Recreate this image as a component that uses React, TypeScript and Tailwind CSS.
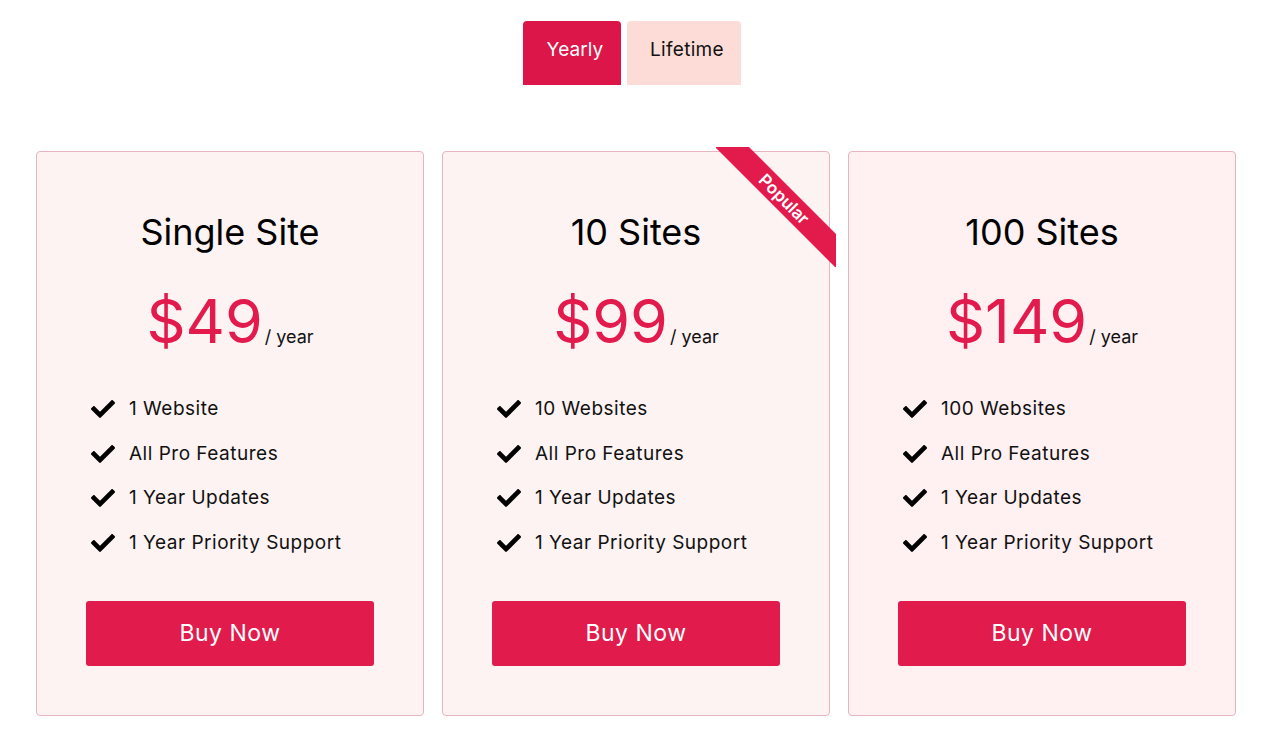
import React from "react";
import { FaCheck } from "react-icons/fa";

type Plan = {
  title: string;
  price: string;
  features: string[];
  popular?: boolean;
  bg: string;
};

const plans: Plan[] = [
  {
    title: "Single Site",
    price: "$49",
    features: ["1 Website", "All Pro Features", "1 Year Updates", "1 Year Priority Support"],
    bg: "bg-[#fdf3f3]",
  },
  {
    title: "10 Sites",
    price: "$99",
    features: ["10 Websites", "All Pro Features", "1 Year Updates", "1 Year Priority Support"],
    popular: true,
    bg: "bg-[#fdf3f3]",
  },
  {
    title: "100 Sites",
    price: "$149",
    features: ["100 Websites", "All Pro Features", "1 Year Updates", "1 Year Priority Support"],
    bg: "bg-[#fff0f1]",
  },
];

function Card({ plan }: { plan: Plan }) {
  return (
    <div
      className={`relative flex h-[565px] w-[388px] flex-col rounded border border-[#e6b5bf] ${plan.bg} px-[49px] pt-[58px]`}
    >
      {plan.popular && (
        <div className="pointer-events-none absolute right-[-7px] top-[-5px] h-[120px] w-[120px] overflow-hidden">
          <div className="absolute left-[-32px] top-[40px] flex h-[24px] w-[200px] rotate-45 items-center justify-center bg-[#e31b4d] text-[17px] font-semibold leading-none text-white">
            Popular
          </div>
        </div>
      )}
      <h2 className="text-center text-[36px] font-normal leading-[44px] text-black">{plan.title}</h2>
      <div className="mt-[29px] flex items-baseline justify-center">
        <span className="text-[61px] leading-[77px] text-[#e31b4d]">{plan.price}</span>
        <span className="ml-[2px] text-[18px] text-[#111]">/ year</span>
      </div>
      <ul className="mt-[27px] flex flex-col pl-[5px]">
        {plan.features.map((f) => (
          <li key={f} className="flex h-[44.5px] items-center text-[19px] text-[#111]">
            <FaCheck className="h-[24px] w-[24px] shrink-0 text-black" />
            <span className="ml-[14px] tracking-[0.5px]">{f}</span>
          </li>
        ))}
      </ul>
      <button className="mt-[36px] flex h-[65px] w-[288px] items-center justify-center rounded-[3px] bg-[#e11b4c] text-[23px] tracking-[0.5px] text-white">
        Buy Now
      </button>
    </div>
  );
}

export default function App() {
  return (
    <div
      className="min-h-[752px] w-full bg-white"
      style={{ fontFamily: "Inter, 'Noto Sans', sans-serif" }}
    >
      <div className="flex justify-center gap-[6px] pt-[21px]">
        <div className="h-[64px] w-[98px] rounded-t bg-[#dc1648] pl-[7px] pt-[15px] text-center text-[19px] leading-[27px] tracking-[0.1px] text-white">
          Yearly
        </div>
        <div className="h-[64px] w-[114px] rounded-t bg-[#fddcd7] pl-[7px] pt-[15px] text-center text-[19px] leading-[27px] tracking-[0.3px] text-[#111]">
          Lifetime
        </div>
      </div>
      <div className="mt-[66px] flex gap-[18px] pl-[36px]">
        {plans.map((p) => (
          <Card key={p.title} plan={p} />
        ))}
      </div>
    </div>
  );
}
